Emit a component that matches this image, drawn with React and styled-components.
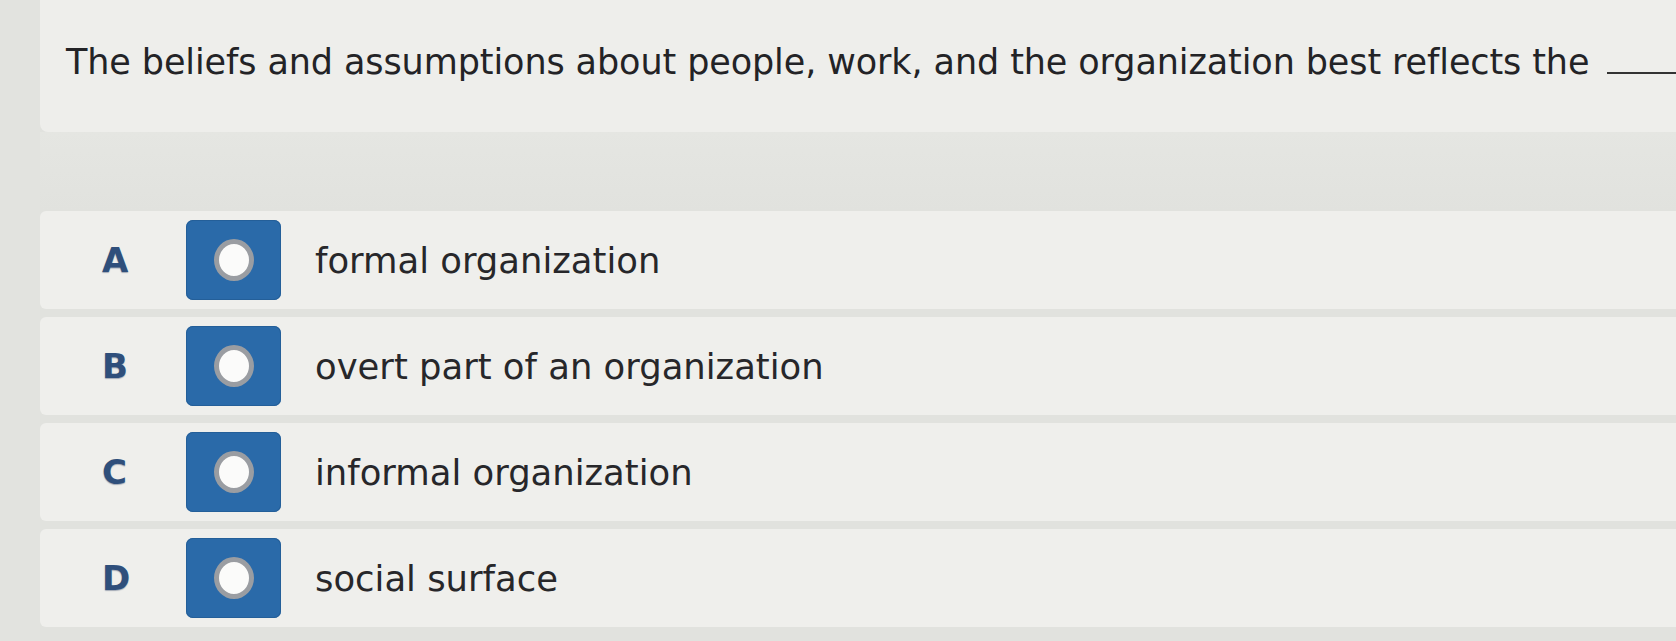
import React from "react";
import styled, { createGlobalStyle } from "styled-components";

const Global = createGlobalStyle`
  html, body { margin: 0; padding: 0; }
  body {
    background: #e1e2de;
    font-family: "DejaVu Sans", Verdana, sans-serif;
    overflow: hidden;
  }
`;

const Page = styled.div`
  width: 1676px;
  height: 641px;
  display: flex;
  background: #e1e2de;
  overflow: hidden;
`;

const Gutter = styled.div`
  width: 40px;
  flex: none;
  background: #e2e3df;
`;

const Main = styled.div`
  flex: 1;
  display: flex;
  flex-direction: column;
  min-width: 0;
`;

const QuestionBox = styled.div`
  height: 132px;
  box-sizing: border-box;
  background: #eeeeeb;
  border-bottom-left-radius: 8px;
  padding: 40px 0 0 26px;
  white-space: nowrap;
  overflow: hidden;
`;

const QuestionText = styled.p`
  margin: 0;
  font-size: 35px;
  line-height: 44px;
  color: #232326;
  letter-spacing: -0.1px;
`;

const Blank = styled.span`
  display: inline-block;
  width: 90px;
  margin-left: 18px;
  border-bottom: 2px solid #333;
  vertical-align: baseline;
`;

const Spacer = styled.div`
  height: 79px;
  background: linear-gradient(#e5e6e2, #e1e2de);
`;

const Options = styled.div`
  display: flex;
  flex-direction: column;
  gap: 8px;
`;

const Row = styled.div`
  height: 98px;
  display: flex;
  align-items: center;
  background: #efefec;
  border-radius: 6px 0 0 6px;
  padding-left: 62px;
`;

const Letter = styled.span`
  width: 84px;
  flex: none;
  font-weight: bold;
  font-size: 34px;
  color: #2f4f7b;
  text-shadow: 0 1px 1px rgba(20, 40, 80, 0.35);
`;

const RadioButton = styled.div`
  width: 95px;
  height: 80px;
  flex: none;
  border-radius: 7px;
  background: #2a6aa9;
  box-shadow: inset 0 0 0 1px #245f99;
  display: flex;
  align-items: center;
  justify-content: center;
`;

const Ring = styled.div`
  width: 30px;
  height: 32px;
  border-radius: 50%;
  background: #fbfbfa;
  border: 5px solid #9a9da2;
`;

const OptionText = styled.span`
  margin-left: 34px;
  font-size: 35.4px;
  color: #27272a;
`;

const options = [
  { key: "A", text: "formal organization" },
  { key: "B", text: "overt part of an organization" },
  { key: "C", text: "informal organization" },
  { key: "D", text: "social surface" },
];

export default function App() {
  return (
    <>
      <Global />
      <Page>
        <Gutter />
        <Main>
          <QuestionBox>
            <QuestionText>
              The beliefs and assumptions about people, work, and the
              organization best reflects the<Blank />
            </QuestionText>
          </QuestionBox>
          <Spacer />
          <Options>
            {options.map((o) => (
              <Row key={o.key}>
                <Letter>{o.key}</Letter>
                <RadioButton>
                  <Ring />
                </RadioButton>
                <OptionText>{o.text}</OptionText>
              </Row>
            ))}
          </Options>
        </Main>
      </Page>
    </>
  );
}
